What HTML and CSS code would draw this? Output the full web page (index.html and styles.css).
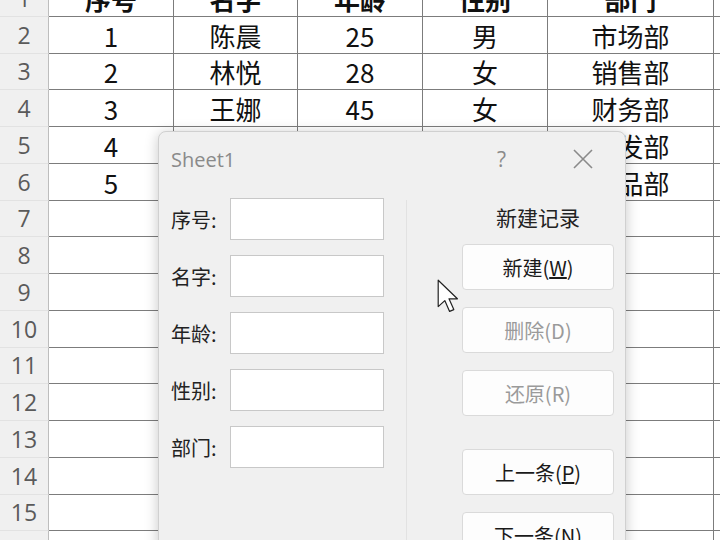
FILE: index.html
```html
<!DOCTYPE html>
<html lang="zh-CN">
<head>
  <meta charset="UTF-8" />
  <title>Sheet1 - 记录单</title>
  <link rel="stylesheet" href="styles.css">
</head>
<body>
  <div class="sheet">
    <div class="row head"><div class="rh">1</div><div class="c">序号</div><div class="c">名字</div><div class="c">年龄</div><div class="c">性别</div><div class="c">部门</div><div class="c rest"></div></div>
    <div class="row"><div class="rh">2</div><div class="c">1</div><div class="c">陈晨</div><div class="c">25</div><div class="c">男</div><div class="c">市场部</div><div class="c rest"></div></div>
    <div class="row"><div class="rh">3</div><div class="c">2</div><div class="c">林悦</div><div class="c">28</div><div class="c">女</div><div class="c">销售部</div><div class="c rest"></div></div>
    <div class="row"><div class="rh">4</div><div class="c">3</div><div class="c">王娜</div><div class="c">45</div><div class="c">女</div><div class="c">财务部</div><div class="c rest"></div></div>
    <div class="row"><div class="rh">5</div><div class="c">4</div><div class="c"></div><div class="c"></div><div class="c"></div><div class="c">研发部</div><div class="c rest"></div></div>
    <div class="row"><div class="rh">6</div><div class="c">5</div><div class="c"></div><div class="c"></div><div class="c"></div><div class="c">产品部</div><div class="c rest"></div></div>
    <div class="row"><div class="rh">7</div><div class="c"></div><div class="c"></div><div class="c"></div><div class="c"></div><div class="c"></div><div class="c rest"></div></div>
    <div class="row"><div class="rh">8</div><div class="c"></div><div class="c"></div><div class="c"></div><div class="c"></div><div class="c"></div><div class="c rest"></div></div>
    <div class="row"><div class="rh">9</div><div class="c"></div><div class="c"></div><div class="c"></div><div class="c"></div><div class="c"></div><div class="c rest"></div></div>
    <div class="row"><div class="rh">10</div><div class="c"></div><div class="c"></div><div class="c"></div><div class="c"></div><div class="c"></div><div class="c rest"></div></div>
    <div class="row"><div class="rh">11</div><div class="c"></div><div class="c"></div><div class="c"></div><div class="c"></div><div class="c"></div><div class="c rest"></div></div>
    <div class="row"><div class="rh">12</div><div class="c"></div><div class="c"></div><div class="c"></div><div class="c"></div><div class="c"></div><div class="c rest"></div></div>
    <div class="row"><div class="rh">13</div><div class="c"></div><div class="c"></div><div class="c"></div><div class="c"></div><div class="c"></div><div class="c rest"></div></div>
    <div class="row"><div class="rh">14</div><div class="c"></div><div class="c"></div><div class="c"></div><div class="c"></div><div class="c"></div><div class="c rest"></div></div>
    <div class="row"><div class="rh">15</div><div class="c"></div><div class="c"></div><div class="c"></div><div class="c"></div><div class="c"></div><div class="c rest"></div></div>
    <div class="row"><div class="rh">16</div><div class="c"></div><div class="c"></div><div class="c"></div><div class="c"></div><div class="c"></div><div class="c rest"></div></div>
  </div>

  <div class="dialog">
    <div class="titlebar">
      <span class="title">Sheet1</span>
      <span class="help">?</span>
      <svg class="close" width="22" height="22" viewBox="0 0 22 22"><path d="M2 2 L20 20 M20 2 L2 20" stroke="#8a8a8a" stroke-width="1.6" fill="none"/></svg>
    </div>
    <div class="dlg-body">
      <div class="fields">
        <div class="field"><label>序号:</label><div class="input"></div></div>
        <div class="field"><label>名字:</label><div class="input"></div></div>
        <div class="field"><label>年龄:</label><div class="input"></div></div>
        <div class="field"><label>性别:</label><div class="input"></div></div>
        <div class="field"><label>部门:</label><div class="input"></div></div>
      </div>
      <div class="actions">
        <div class="rec-label">新建记录</div>
        <button class="btn first">新建(<u>W</u>)</button>
        <button class="btn off">删除(D)</button>
        <button class="btn off">还原(R)</button>
        <button class="btn gap">上一条(<u>P</u>)</button>
        <button class="btn">下一条(<u>N</u>)</button>
      </div>
    </div>
  </div>

  <svg class="cursor" width="24" height="36" viewBox="0 0 20 30">
    <path d="M1 1 L1 23 L6.5 18 L10.5 27 L14 25.5 L10 16.5 L17 16.5 Z" fill="#fff" stroke="#222" stroke-width="1" stroke-linejoin="round"/>
  </svg>
</body>
</html>
```

FILE: styles.css
```css
body {
  margin: 0;
  width: 720px;
  height: 540px;
  overflow: hidden;
  background: #fff;
  font-family: "Noto Sans CJK SC", "Noto Sans", sans-serif;
  color: #111;
  position: relative;
}

.sheet {
  margin-top: -20px;
}

.row {
  display: grid;
  grid-template-columns: 49px 125px 124px 125px 125px 166px 1fr;
  height: 36.75px;
}

.row > div {
  box-sizing: border-box;
  border-bottom: 1px solid #7c7c7c;
  border-right: 1px solid #7c7c7c;
  display: flex;
  align-items: center;
  justify-content: center;
}

.row .rh {
  background: #f0f0f0;
  color: #5a5a5a;
  font-family: "Open Sans", "Noto Sans", sans-serif;
  font-size: 23px;
  border-bottom: 1px solid #e2e2e2;
  border-right: 1px solid #bdbdbd;
}

.row .c {
  font-size: 26px;
  line-height: 1;
  padding-top: 2px;
}

.row.head .c {
  font-weight: bold;
}

.row .rest {
  border-right: none;
}

/* data form dialog */
.dialog {
  position: absolute;
  left: 158px;
  top: 131px;
  width: 468px;
  height: 440px;
  box-sizing: border-box;
  background: #f0f0f0;
  border: 1px solid #d0d0d0;
  border-radius: 8px;
  box-shadow: 0 2px 14px rgba(0, 0, 0, 0.22);
}

.titlebar {
  display: flex;
  align-items: center;
  height: 54px;
  padding-left: 12px;
}

.title {
  font-family: "Open Sans", "Noto Sans", sans-serif;
  font-size: 20px;
  color: #8a8a8a;
  flex: 1;
}

.help {
  font-family: "Open Sans", "Noto Sans", sans-serif;
  font-size: 21px;
  color: #8a8a8a;
  margin-right: 66px;
}

.close {
  margin-right: 31px;
}

.dlg-body {
  display: flex;
  height: 380px;
}

.fields {
  width: 247px;
  padding: 12px 0 0 12px;
  box-sizing: border-box;
  display: flex;
  flex-direction: column;
  gap: 15px;
}

.field {
  display: flex;
  align-items: center;
}

.field label {
  width: 59px;
  font-size: 20px;
  color: #222;
}

.input {
  width: 154px;
  height: 42px;
  box-sizing: border-box;
  background: #fff;
  border: 1px solid #c8c8c8;
}

.actions {
  flex: 1;
  border-left: 1px solid #e2e2e2;
  margin-top: 14px;
  padding-left: 55px;
  display: flex;
  flex-direction: column;
  align-items: flex-start;
}

.rec-label {
  width: 152px;
  text-align: center;
  font-size: 21px;
  color: #222;
  margin-top: 2px;
}

.btn {
  width: 152px;
  height: 46px;
  margin-top: 17px;
  background: #fdfdfd;
  border: 1px solid #dadada;
  border-radius: 4px;
  font-family: "Noto Sans CJK SC", "Noto Sans", sans-serif;
  font-size: 20px;
  color: #1a1a1a;
  padding: 0;
}

.btn.first {
  margin-top: 12px;
}

.btn.off {
  color: #9a9a9a;
}

.btn.gap {
  margin-top: 33px;
}

.cursor {
  position: absolute;
  left: 437px;
  top: 279px;
}
```
